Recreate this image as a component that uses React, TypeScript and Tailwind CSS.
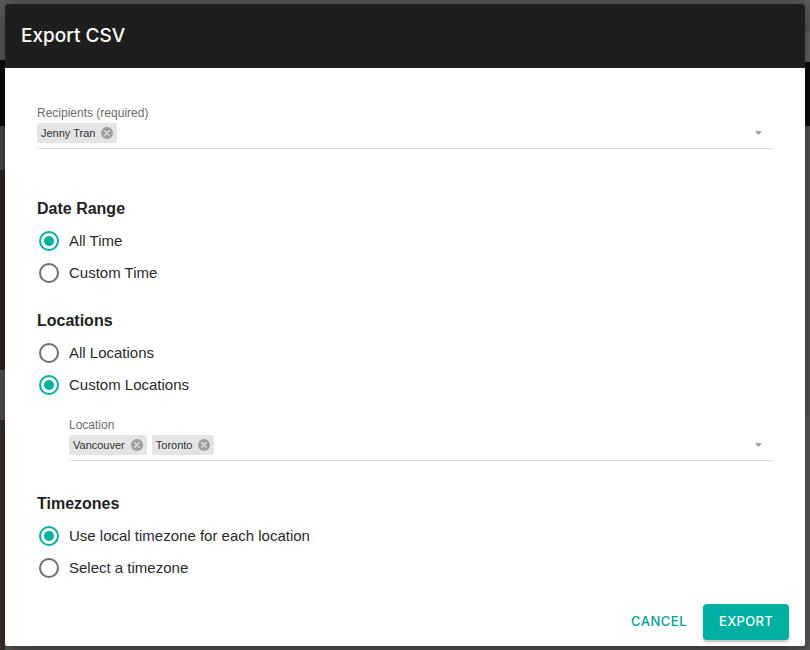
import React from "react";

const TEAL = "#00b0a0";

function ChipX() {
  return (
    <svg width="12" height="12" viewBox="0 0 12 12" className="shrink-0">
      <circle cx="6" cy="6" r="6" fill="#9e9e9e" />
      <path d="M3.8 3.8 L8.2 8.2 M8.2 3.8 L3.8 8.2" stroke="#e0e0e0" strokeWidth="1.4" strokeLinecap="round" />
    </svg>
  );
}

function Chip({ label }: { label: string }) {
  return (
    <div className="flex h-5 items-center gap-[6px] rounded-[2px] bg-[#e4e4e4] pl-[4px] pr-[4px] text-[11px] text-[#333]">
      <span>{label}</span>
      <ChipX />
    </div>
  );
}

function Arrow() {
  return (
    <svg width="7" height="4" viewBox="0 0 7 4">
      <path d="M0 0 H7 L3.5 4 Z" fill="#a0a0a0" />
    </svg>
  );
}

function ChipField({ label, chips }: { label: string; chips: string[] }) {
  return (
    <div className="flex flex-col border-b border-[#dcdcdc] pb-[5px]">
      <div className="h-4 text-[12px] leading-4 text-[#6b6b6b]">{label}</div>
      <div className="mt-[2px] flex h-5 items-center">
        <div className="flex flex-1 items-center gap-[5px]">
          {chips.map((c) => (
            <Chip key={c} label={c} />
          ))}
        </div>
        <div className="mr-[11px]">
          <Arrow />
        </div>
      </div>
    </div>
  );
}

function Radio({ checked, label }: { checked?: boolean; label: string }) {
  return (
    <div className="flex h-8 items-center">
      <div
        className={
          checked
            ? "ml-[2px] flex h-5 w-5 items-center justify-center rounded-full border-2 border-[#00b0a0]"
            : "ml-[2px] flex h-5 w-5 items-center justify-center rounded-full border-2 border-[#6d6d6d]"
        }
      >
        {checked && <div className="h-[10px] w-[10px] rounded-full bg-[#00b0a0]" />}
      </div>
      <span className="ml-[10px] text-[15px] text-[#2a2a2a]">{label}</span>
    </div>
  );
}

function Heading({ children }: { children: React.ReactNode }) {
  return <div className="h-6 text-[16px] font-bold leading-6 text-[#222]">{children}</div>;
}

export default function App() {
  return (
    <div
      className="relative h-[650px] w-[810px] overflow-hidden bg-[#5a5a5a]"
      style={{ fontFamily: '"Liberation Sans", Arial, sans-serif' }}
    >
      {/* background behind overlay */}
      <div className="flex h-full w-full">
        <div className="flex w-[5px] flex-col">
          <div className="h-[60px] bg-[#5e5e5e]" />
          <div className="h-[66px] bg-[#0b0b0b]" />
          <div className="h-[44px] bg-[#4a4a4a]" />
          <div className="h-[200px] bg-[#2f2624]" />
          <div className="h-[50px] bg-[#555]" />
          <div className="flex-1 bg-[#3a302c]" />
        </div>
        <div className="flex-1" />
        <div className="flex w-[5px] flex-col">
          <div className="h-[32px] bg-[#5e5e5e]" />
          <div className="h-[30px] bg-[#6a6a6a]" />
          <div className="h-[64px] bg-[#0b0b0b]" />
          <div className="h-[290px] bg-[#555]" />
          <div className="flex-1 bg-[#5c5c5c]" />
        </div>
      </div>

      {/* dialog */}
      <div className="absolute left-[5px] top-[4px] flex h-[642px] w-[800px] flex-col overflow-hidden rounded-[2px] bg-white shadow-[0_4px_20px_rgba(0,0,0,0.5)]">
        <div className="flex h-16 shrink-0 items-center bg-[#1e1e1e] pl-4">
          <span
            className="text-[19px] font-medium text-white"
            style={{ fontFamily: 'Inter, "Noto Sans", sans-serif' }}
          >
            Export CSV
          </span>
        </div>

        <div className="flex flex-1 flex-col px-8 pt-[37px]">
          <ChipField label="Recipients (required)" chips={["Jenny Tran"]} />

          <div className="mt-[48px]">
            <Heading>Date Range</Heading>
          </div>
          <div className="mt-1 flex flex-col">
            <Radio checked label="All Time" />
            <Radio label="Custom Time" />
          </div>

          <div className="mt-5">
            <Heading>Locations</Heading>
          </div>
          <div className="mt-1 flex flex-col">
            <Radio label="All Locations" />
            <Radio checked label="Custom Locations" />
          </div>

          <div className="mt-4 pl-8">
            <ChipField label="Location" chips={["Vancouver", "Toronto"]} />
          </div>

          <div className="mt-[31px]">
            <Heading>Timezones</Heading>
          </div>
          <div className="mt-1 flex flex-col">
            <Radio checked label="Use local timezone for each location" />
            <Radio label="Select a timezone" />
          </div>
        </div>

        <div
          className="flex items-center justify-end gap-2 pb-[6px] pr-4"
          style={{ fontFamily: 'Inter, "Noto Sans", sans-serif' }}
        >
          <button className="h-9 rounded px-2 text-[13px] font-medium tracking-[0.5px] text-[#00a194]">
            CANCEL
          </button>
          <button
            className="h-9 rounded-[4px] px-4 text-[13px] font-medium tracking-[0.3px] text-white shadow-[0_2px_3px_rgba(0,0,0,0.25)]"
            style={{ backgroundColor: TEAL }}
          >
            EXPORT
          </button>
        </div>
      </div>
    </div>
  );
}
